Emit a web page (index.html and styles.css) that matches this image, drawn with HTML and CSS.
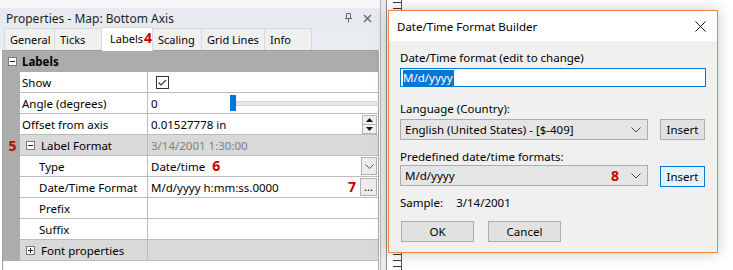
FILE: index.html
```html
<!DOCTYPE html>
<html>
<head>
<meta charset="utf-8">
<link rel="stylesheet" href="styles.css">
</head>
<body>
<div class="screen">
  <section class="props">
    <div class="props-top"></div>
    <header class="props-title">
      <span>Properties - Map: Bottom Axis</span>
      <span class="title-icons">
        <svg width="9" height="10" viewBox="0 0 9 10"><path d="M2.5 0.5h4v5h-4z M1 5.5h7 M4.5 5.5v4" fill="none" stroke="#666" stroke-width="1"/></svg>
        <svg width="9" height="9" viewBox="0 0 9 9"><path d="M1 1L8 8M8 1L1 8" stroke="#666" stroke-width="1.4"/></svg>
      </span>
    </header>
    <nav class="tabs">
      <div class="tab t-general">General</div>
      <div class="tab t-ticks">Ticks</div>
      <div class="tab t-labels active">Labels<b class="num">4</b></div>
      <div class="tab t-scaling">Scaling</div>
      <div class="tab t-grid">Grid Lines</div>
      <div class="tab t-info">Info</div>
    </nav>
    <div class="grid">
      <div class="row cat">
        <span class="margin"><i class="box minus"></i></span>
        <span class="cat-name">Labels</span>
      </div>
      <div class="row">
        <span class="margin"></span>
        <span class="name">Show</span>
        <span class="value">
          <svg class="check" width="13" height="13" viewBox="0 0 13 13"><rect x="0.5" y="0.5" width="12" height="12" fill="#fff" stroke="#333"/><path d="M2.5 6.5l2.5 2.5l5-5" fill="none" stroke="#333" stroke-width="1.1"/></svg>
        </span>
      </div>
      <div class="row">
        <span class="margin"></span>
        <span class="name">Angle (degrees)</span>
        <span class="value slider-cell"><span class="v0">0</span><span class="thumb"></span><span class="track"></span></span>
      </div>
      <div class="row">
        <span class="margin"></span>
        <span class="name">Offset from axis</span>
        <span class="value">0.01527778 in
          <span class="spin">
            <span class="spin-btn"><svg width="7" height="4" viewBox="0 0 7 4"><path d="M0 4L3.5 0L7 4z" fill="#111"/></svg></span>
            <span class="spin-btn"><svg width="7" height="4" viewBox="0 0 7 4"><path d="M0 0L3.5 4L7 0z" fill="#111"/></svg></span>
          </span>
        </span>
      </div>
      <div class="row sub">
        <span class="margin"><b class="num">5</b></span>
        <span class="name lvl1"><i class="box minus"></i>Label Format</span>
        <span class="value muted">3/14/2001 1:30:00</span>
      </div>
      <div class="row">
        <span class="margin"></span>
        <span class="name lvl2">Type</span>
        <span class="value">Date/time<b class="num n6">6</b>
          <span class="mini-btn drop"><svg width="9" height="5" viewBox="0 0 9 5"><path d="M0.5 0.5l4 4l4-4" fill="none" stroke="#555"/></svg></span>
        </span>
      </div>
      <div class="row">
        <span class="margin"></span>
        <span class="name lvl2">Date/Time Format</span>
        <span class="value">M/d/yyyy h:mm:ss.0000<b class="num n7">7</b>
          <span class="mini-btn dots">...</span>
        </span>
      </div>
      <div class="row">
        <span class="margin"></span>
        <span class="name lvl2">Prefix</span>
        <span class="value"></span>
      </div>
      <div class="row">
        <span class="margin"></span>
        <span class="name lvl2">Suffix</span>
        <span class="value"></span>
      </div>
      <div class="row sub">
        <span class="margin"></span>
        <span class="name lvl1"><i class="box plus"></i>Font properties</span>
        <span class="value"></span>
      </div>
    </div>
  </section>
  <div class="gutter"></div>
  <div class="canvas">
    <div class="ruler"></div>
    <div class="dialog">
      <div class="dlg-title">
        <span>Date/Time Format Builder</span>
        <svg width="11" height="11" viewBox="0 0 11 11"><path d="M0.5 0.5L10.5 10.5M10.5 0.5L0.5 10.5" stroke="#111" stroke-width="1"/></svg>
      </div>
      <div class="dlg-body">
        <div class="lbl l1">Date/Time format (edit to change)</div>
        <div class="input"><span class="sel">M/d/yyyy</span></div>
        <div class="lbl l2">Language (Country):</div>
        <div class="combo-row r1">
          <div class="combo"><span>English (United States) - [$-409]</span><svg width="10" height="6" viewBox="0 0 10 6"><path d="M0.5 0.5l4.5 4.5l4.5-4.5" fill="none" stroke="#444"/></svg></div>
          <div class="btn ins">Insert</div>
        </div>
        <div class="lbl l3">Predefined date/time formats:</div>
        <div class="combo-row r2">
          <div class="combo"><span>M/d/yyyy</span><b class="num n8">8</b><svg width="10" height="6" viewBox="0 0 10 6"><path d="M0.5 0.5l4.5 4.5l4.5-4.5" fill="none" stroke="#444"/></svg></div>
          <div class="btn ins default">Insert</div>
        </div>
        <div class="sample"><span>Sample:</span><span>3/14/2001</span></div>
        <div class="actions">
          <div class="btn act">OK</div>
          <div class="btn act">Cancel</div>
        </div>
      </div>
    </div>
  </div>
</div>
</body>
</html>
```
FILE: styles.css
```css
* { box-sizing: border-box; }
body {
  margin: 0;
  width: 733px;
  height: 270px;
  overflow: hidden;
  background: #fff;
  font-family: "Noto Sans", "Open Sans", sans-serif;
  font-size: 11.5px;
  color: #000;
}
.screen { display: flex; height: 270px; }

/* properties panel */
.props { width: 380px; flex: none; display: flex; flex-direction: column; background: #fff; }
.props-top { height: 8px; background: #f7f7f7; }
.props-title {
  height: 20px;
  background: #e7eaee;
  display: flex;
  align-items: center;
  justify-content: space-between;
  padding: 0 8px 0 6px;
  color: #1e1e1e;
  font-size: 12px;
}
.title-icons { display: flex; gap: 10px; align-items: center; }
.tabs {
  height: 22px;
  background: #e9ecf0;
  display: flex;
  align-items: flex-end;
  padding-left: 4px;
}
.tab {
  height: 22px;
  background: #f0f0f0;
  border: 1px solid #d9d9d9;
  border-bottom: none;
  border-left: none;
  padding: 3px 0 0 5px;
  white-space: nowrap;
  font-size: 11px;
}
.tab.t-general { border-left: 1px solid #d9d9d9; width: 51px; }
.t-ticks { width: 47px; }
.t-labels { width: 51px; }
.t-scaling { width: 49px; }
.t-grid { width: 63px; }
.t-info { width: 47px; }
.tab.active {
  background: #fff;
  height: 24px;
  margin-bottom: -1px;
  position: relative;
  padding: 3px 0 0 8px;
  z-index: 1;
}
.num { color: #c80000; font-weight: bold; font-size: 14px; line-height: 1; }
.tab .num { margin-left: 1px; }

.grid {
  margin-left: 2px;
  width: 377px;
  flex: 1;
  border: 1px solid #a0a0a0;
  border-bottom: none;
  border-right: 1px solid #a8a8a8;
  background: #fff;
}
.row {
  height: 21px;
  display: grid;
  grid-template-columns: 17px 128px 1fr;
}
.row > span { display: flex; align-items: center; }
.margin { background: #acacac; justify-content: center; }
.name, .value { border-bottom: 1px solid #bcbcbc; padding-left: 2px; }
.name { border-right: 1px solid #bcbcbc; }
.value { position: relative; padding-left: 3px; }
.row.cat { background: #acacac; }
.row.cat .margin { justify-content: flex-start; padding-left: 5px; }
.cat-name { grid-column: 2 / 4; font-weight: bold; padding-left: 2px; }
.row.sub .name, .row.sub .value { background: #d9d9d9; }
.row.sub .margin .num { margin-left: 2px; }
.lvl1 { padding-left: 6px; }
.lvl2 { padding-left: 19px; }
.muted { color: #808080; }
.box {
  display: inline-block;
  width: 9px;
  height: 9px;
  border: 1px solid #7a7a7a;
  background: #fff;
  position: relative;
  margin-right: 6px;
}
.box::before {
  content: "";
  position: absolute;
  left: 1px; top: 3px;
  width: 5px; height: 1px;
  background: #222;
}
.box.plus::after {
  content: "";
  position: absolute;
  left: 3px; top: 1px;
  width: 1px; height: 5px;
  background: #222;
}
.cat .box { margin-right: 0; }
.check { margin-left: 5px; }
.slider-cell .v0 { width: 79px; }
.thumb { width: 6px; height: 16px; background: #0078d7; flex: none; }
.track { flex: 1; height: 5px; background: #e7e7e7; border: 1px solid #d6d6d6; margin-right: 1px; }
.spin {
  position: absolute;
  right: 1px; top: 1px;
  width: 15px;
  height: 19px;
  display: flex;
  flex-direction: column;
}
.spin-btn {
  flex: 1;
  background: #efefef;
  border: 1px solid #b8b8b8;
  display: flex;
  align-items: center;
  justify-content: center;
}
.spin-btn + .spin-btn { border-top: none; }
.mini-btn {
  position: absolute;
  right: 1px;
  top: 1px;
  height: 18px;
  width: 16px;
  background: #ececec;
  border: 1px solid #b2b2b2;
  display: flex;
  align-items: center;
  justify-content: center;
}
.mini-btn.dots { width: 17px; font-size: 11px; align-items: flex-end; padding-bottom: 3px; line-height: 1; }
.n6 { margin-left: 7px; }
.n7 { position: absolute; right: 22px; top: 3px; }

/* right side */
.gutter { width: 6px; flex: none; background: #ececec; border-left: 1px solid #b4b4b4; }
.canvas {
  flex: 1;
  position: relative;
  border-left: 1px solid #8c8c8c;
  background: #fff;
}
.ruler {
  position: absolute;
  left: 1px; top: 0; bottom: 0;
  width: 14px;
  border-right: 1px solid #555;
  background: repeating-linear-gradient(to bottom, transparent 0 2px, #333 2px 3px, transparent 3px 6px);
  background-size: 8px 6px;
  background-repeat: repeat-y;
  background-position: 5px 0;
}

/* dialog */
.dialog {
  position: absolute;
  left: 1px;
  top: 10px;
  width: 330px;
  height: 243px;
  border: 1px solid #ea8a42;
  background: #f0f0f0;
  box-shadow: 0 0 14px rgba(0, 0, 0, 0.22);
  display: flex;
  flex-direction: column;
}
.dlg-title {
  height: 30px;
  background: #fff;
  display: flex;
  align-items: center;
  justify-content: space-between;
  padding: 0 11px 0 8px;
  flex: none;
}
.dlg-body { padding: 10px 10px 0 11px; }
.lbl { line-height: 14px; }
.input {
  margin-top: 3px;
  width: 306px;
  height: 19px;
  background: #fff;
  border: 1px solid #0078d7;
  padding: 1px 0 0 2px;
  display: flex;
}
.sel { background: #0078d7; color: #fff; line-height: 15px; padding-right: 1px; }
.l2 { margin-top: 15px; }
.l3 { margin-top: 10px; }
.combo-row { display: flex; gap: 12px; }
.r1 { margin-top: 3px; }
.r2 { margin-top: 1px; }
.combo {
  width: 248px;
  height: 21px;
  background: #e5e5e5;
  border: 1px solid #adadad;
  display: flex;
  align-items: center;
  padding: 0 6px 0 4px;
}
.combo span { flex: 1; }
.n8 { margin-right: 12px; }
.btn {
  background: #e1e1e1;
  border: 1px solid #adadad;
  display: flex;
  align-items: center;
  justify-content: center;
}
.ins { width: 45px; height: 21px; }
.ins.default { background: #e5f1fb; border-color: #0078d7; margin-top: 1px; }
.sample { margin-top: 9px; display: flex; gap: 13px; line-height: 14px; }
.actions { display: flex; gap: 14px; margin-top: 11px; padding-left: 1px; }
.act { width: 73px; height: 21px; }
```
